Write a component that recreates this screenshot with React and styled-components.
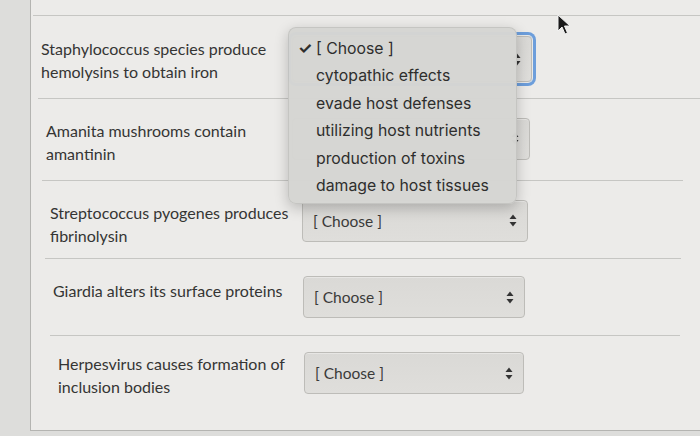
import React from 'react';
import styled, { createGlobalStyle } from 'styled-components';

const GlobalStyle = createGlobalStyle`
  html, body {
    margin: 0;
    padding: 0;
    background: #dddddb;
  }
`;

const Page = styled.div`
  position: relative;
  width: 700px;
  height: 436px;
  overflow: hidden;
  padding-left: 30px;
  box-sizing: border-box;
  font-family: Lato, 'Liberation Sans', sans-serif;
`;

const Card = styled.div`
  height: 431px;
  box-sizing: border-box;
  background: #ecebe9;
  border-left: 1px solid #b4b4b1;
  border-bottom: 1px solid #b4b4b1;
  padding-top: 15px;
  display: flex;
  flex-direction: column;
`;

const Row = styled.div`
  display: flex;
  align-items: flex-start;
  box-sizing: border-box;
  height: ${({ h }) => h}px;
  margin-left: ${({ shift }) => shift}px;
  margin-right: ${({ end }) => end}px;
  padding-top: ${({ top }) => top}px;
  border-top: 1px solid #c6c6c3;
`;

const Label = styled.div`
  flex: 0 0 ${({ w }) => w}px;
  box-sizing: border-box;
  padding: ${({ lift }) => 1 + lift}px 8px 0 8px;
  font-size: 16px;
  line-height: 23px;
  color: #353534;
`;

const SelectBox = styled.div`
  position: relative;
  display: flex;
  align-items: center;
  justify-content: space-between;
  box-sizing: border-box;
  width: ${({ w }) => w}px;
  height: ${({ focused }) => (focused ? 46 : 42)}px;
  padding: 0 10px 0 10px;
  background: linear-gradient(#dad9d6, #dfdedb);
  border: 1px solid #bdbcb8;
  border-radius: 4px;
  font-size: 15.5px;
  color: #3a3a39;
  box-shadow: ${({ focused }) =>
    focused ? '0 0 0 1px #e9e9e7, 0 0 0 4px #6d9edb' : 'inset 0 1px 0 rgba(255,255,255,0.35)'};
`;

const Menu = styled.div`
  position: absolute;
  left: -5px;
  top: -10px;
  width: 229px;
  box-sizing: border-box;
  padding: 7px 0 4px;
  background: rgba(213, 213, 210, 0.98);
  border: 1px solid rgba(0, 0, 0, 0.08);
  border-radius: 8px;
  box-shadow: 0 4px 14px rgba(0, 0, 0, 0.22);
  font-family: Inter, 'Open Sans', sans-serif;
  z-index: 2;
`;

const MenuItem = styled.div`
  position: relative;
  height: 27.4px;
  line-height: 27.4px;
  padding-left: 27px;
  font-size: 15.8px;
  color: #2e2e2d;
  white-space: nowrap;
`;

const Check = styled.span`
  position: absolute;
  left: 9px;
  top: 0;
  font-size: 16px;
  font-weight: 700;
  color: #2e2e2d;
`;

const Pointer = styled.svg`
  position: absolute;
  left: 557px;
  top: 14px;
`;

const Arrows = () => (
  <svg width="8" height="13" viewBox="0 0 8 13">
    <path d="M4 0.5 L7.5 5 H0.5 Z" fill="#333" />
    <path d="M4 12.5 L7.5 8 H0.5 Z" fill="#333" />
  </svg>
);

const options = [
  'cytopathic effects',
  'evade host defenses',
  'utilizing host nutrients',
  'production of toxins',
  'damage to host tissues',
];

const rows = [
  { text: 'Staphylococcus species produce hemolysins to obtain iron', shift: 2, end: 0, h: 83, top: 20, lw: 259, sw: 240, lift: 0, open: true, hidden: true },
  { text: 'Amanita mushrooms contain amantinin', shift: 7, end: 0, h: 82, top: 19, lw: 254, sw: 238, lift: 0, hidden: true },
  { text: 'Streptococcus pyogenes produces fibrinolysin', shift: 11, end: 17, h: 79, top: 19, lw: 260, sw: 226, lift: 0 },
  { text: 'Giardia alters its surface proteins', shift: 14, end: 19, h: 77, top: 17, lw: 258, sw: 222, lift: 2 },
  { text: 'Herpesvirus causes formation of inclusion bodies', shift: 19, end: 20, h: 95, top: 16, lw: 254, sw: 220, lift: -1 },
];

const App = () => (
  <Page>
    <GlobalStyle />
    <Card>
      {rows.map((r) => (
        <Row key={r.text} h={r.h} shift={r.shift} end={r.end} top={r.top}>
          <Label w={r.lw} lift={r.lift}>{r.text}</Label>
          <SelectBox w={r.sw} focused={r.open}>
            <span>{r.hidden ? '' : '[ Choose ]'}</span>
            <Arrows />
            {r.open && (
              <Menu>
                <MenuItem>
                  <Check>✓</Check>[ Choose ]
                </MenuItem>
                {options.map((o) => (
                  <MenuItem key={o}>{o}</MenuItem>
                ))}
              </Menu>
            )}
          </SelectBox>
        </Row>
      ))}
    </Card>
    <Pointer width="14" height="22" viewBox="0 0 14 22">
      <path d="M1 1 L1 17 L5 13 L8 20 L10.5 19 L7.5 12 L13 12 Z" fill="#1a1a1a" stroke="#f2f2f2" strokeWidth="1" />
    </Pointer>
  </Page>
);

export default App;
